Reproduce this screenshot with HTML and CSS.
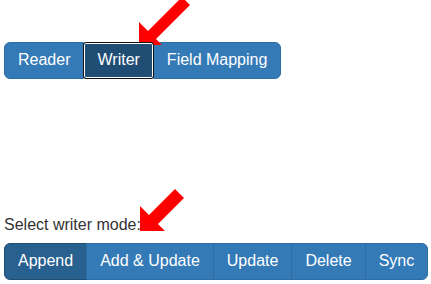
FILE: index.html
```
<!DOCTYPE html>
<html>
<head>
<meta charset="utf-8">
<link rel="stylesheet" href="styles.css">
</head>
<body>
<div class="page">
  <div class="btn-group top-group">
    <button class="btn">Reader</button>
    <button class="btn focus">Writer</button>
    <button class="btn">Field Mapping</button>
  </div>
  <div class="mode-label">Select writer mode:</div>
  <div class="btn-group">
    <button class="btn active">Append</button>
    <button class="btn">Add &amp; Update</button>
    <button class="btn">Update</button>
    <button class="btn">Delete</button>
    <button class="btn">Sync</button>
  </div>
</div>
<svg class="arrow arrow-top" width="56" height="52" viewBox="0 0 56 52"><polygon points="2,50 2,27 11,36 45,2 53,10 19,44 25,50" fill="#f00"/></svg>
<svg class="arrow arrow-bottom" width="56" height="52" viewBox="0 0 56 52"><polygon points="2,50 2,25 11,34 37,8 46,17 20,43 27,50" fill="#f00"/></svg>
</body>
</html>
```
FILE: styles.css
```
html, body {
  margin: 0;
  padding: 0;
  background: #fff;
}
body {
  font-family: "Liberation Sans", Arial, sans-serif;
  font-size: 16px;
  line-height: 1.42857;
  color: #333;
  width: 431px;
  height: 284px;
  overflow: hidden;
  position: relative;
}
.page {
  display: flex;
  flex-direction: column;
  align-items: flex-start;
  padding: 42px 0 0 4px;
}
.btn-group {
  display: flex;
  flex-wrap: nowrap;
}
.top-group {
  margin-bottom: 135px;
}
.mode-label {
  margin-bottom: 6px;
  white-space: nowrap;
}
.btn {
  font-family: "Liberation Sans", Arial, sans-serif;
  font-size: 16px;
  line-height: 1.42857;
  padding: 6px 13px;
  color: #fff;
  background: #337ab7;
  border: 1px solid #2e6da4;
  border-radius: 0;
  margin: 0;
  cursor: pointer;
  white-space: nowrap;
  flex-shrink: 0;
}
.btn + .btn {
  margin-left: -1px;
}
.btn:first-child {
  border-radius: 6px 0 0 6px;
}
.btn:last-child {
  border-radius: 0 6px 6px 0;
}
.btn.active {
  background: #286090;
  border-color: #204d74;
}
.btn.focus {
  background: #204d74;
  border-color: #101010;
  box-shadow: inset 0 0 0 1px #fff;
  border-radius: 3px;
  position: relative;
  z-index: 1;
}
.arrow {
  position: absolute;
}
.arrow-top {
  left: 137px;
  top: -5px;
}
.arrow-bottom {
  left: 138px;
  top: 181px;
}
```
